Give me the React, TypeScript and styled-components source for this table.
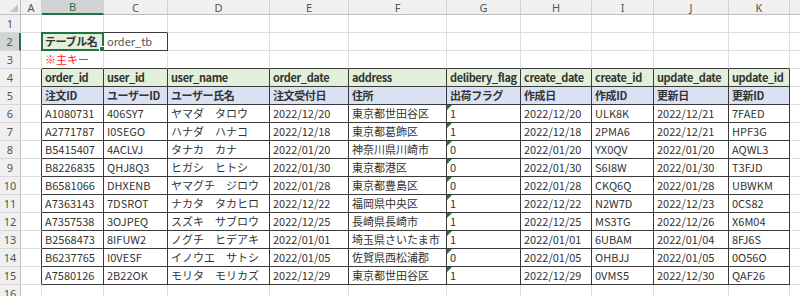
import React from 'react';
import styled, { createGlobalStyle, css } from 'styled-components';

const GlobalStyle = createGlobalStyle`
  html, body {
    margin: 0;
    padding: 0;
    background: #ffffff;
  }
  body {
    font-family: "Noto Sans CJK JP", "Noto Sans", sans-serif;
  }
`;

const COLS = ['A', 'B', 'C', 'D', 'E', 'F', 'G', 'H', 'I', 'J', 'K', ''];
const WIDTHS = [21, 62, 64, 102, 79, 98, 74, 71, 62, 75, 61, 40];

const header = ['order_id', 'user_id', 'user_name', 'order_date', 'address', 'delibery_flag', 'create_date', 'create_id', 'update_date', 'update_id'];
const headerJa = ['注文ID', 'ユーザーID', 'ユーザー氏名', '注文受付日', '住所', '出荷フラグ', '作成日', '作成ID', '更新日', '更新ID'];

const data = [
  ['A1080731', '406SY7', 'ヤマダ　タロウ', '2022/12/20', '東京都世田谷区', '1', '2022/12/20', 'ULK8K', '2022/12/21', '7FAED'],
  ['A2771787', 'I0SEGO', 'ハナダ　ハナコ', '2022/12/18', '東京都葛飾区', '1', '2022/12/18', '2PMA6', '2022/12/21', 'HPF3G'],
  ['B5415407', '4ACLVJ', 'タナカ　カナ', '2022/01/20', '神奈川県川崎市', '0', '2022/01/20', 'YX0QV', '2022/01/20', 'AQWL3'],
  ['B8226835', 'QHJ8Q3', 'ヒガシ　ヒトシ', '2022/01/30', '東京都港区', '0', '2022/01/30', 'S6I8W', '2022/01/30', 'T3FJD'],
  ['B6581066', 'DHXENB', 'ヤマグチ　ジロウ', '2022/01/28', '東京都豊島区', '0', '2022/01/28', 'CKQ6Q', '2022/01/28', 'UBWKM'],
  ['A7363143', '7DSROT', 'ナカタ　タカヒロ', '2022/12/22', '福岡県中央区', '1', '2022/12/22', 'N2W7D', '2022/12/23', '0CS82'],
  ['A7357538', '3OJPEQ', 'スズキ　サブロウ', '2022/12/25', '長崎県長崎市', '1', '2022/12/25', 'MS3TG', '2022/12/26', 'X6M04'],
  ['B2568473', '8IFUW2', 'ノグチ　ヒデアキ', '2022/01/01', '埼玉県さいたま市', '1', '2022/01/01', '6UBAM', '2022/01/04', '8FJ6S'],
  ['B6237765', 'I0VESF', 'イノウエ　サトシ', '2022/01/05', '佐賀県西松浦郡', '0', '2022/01/05', 'OHBJJ', '2022/01/05', '0O56O'],
  ['A7580126', '2B22OK', 'モリタ　モリカズ', '2022/12/29', '東京都世田谷区', '1', '2022/12/29', '0VMS5', '2022/12/30', 'QAF26'],
];

const GRID = '#DEDEDE';
const DARK = '#3a3a3a';
const GREEN = '#217346';

const Sheet = styled.div`
  width: 800px;
  height: 296px;
  overflow: hidden;
  display: grid;
  grid-template-columns: 21px ${WIDTHS.map((w) => `${w}px`).join(' ')};
  grid-template-rows: 15px repeat(16, 18px);
  font-size: 11px;
  color: #333333;
`;

const ColHead = styled.div<{ $active?: boolean }>`
  box-sizing: border-box;
  display: flex;
  align-items: center;
  justify-content: center;
  background: ${(p) => (p.$active ? '#D3D3D3' : '#F0F0F0')};
  color: ${(p) => (p.$active ? GREEN : '#555555')};
  border-right: 1px solid #D0D0D0;
  border-bottom: ${(p) => (p.$active ? `2px solid ${GREEN}` : '1px solid #BFBFBF')};
  font-family: "Noto Sans", "Noto Sans CJK JP", sans-serif;
  font-size: 11px;
`;

const Corner = styled.div`
  box-sizing: border-box;
  position: relative;
  background: #F0F0F0;
  border-right: 1px solid #BFBFBF;
  border-bottom: 1px solid #BFBFBF;
  &::after {
    content: '';
    position: absolute;
    right: 2px;
    bottom: 2px;
    border-left: 8px solid transparent;
    border-bottom: 8px solid #C6C6C6;
  }
`;

const RowHead = styled.div<{ $active?: boolean }>`
  box-sizing: border-box;
  display: flex;
  align-items: center;
  justify-content: center;
  background: ${(p) => (p.$active ? '#D3D3D3' : '#F0F0F0')};
  color: ${(p) => (p.$active ? GREEN : '#555555')};
  border-bottom: 1px solid #D8D8D8;
  border-right: ${(p) => (p.$active ? `2px solid ${GREEN}` : '1px solid #BFBFBF')};
  font-family: "Noto Sans", "Noto Sans CJK JP", sans-serif;
  font-size: 11px;
`;

const Cell = styled.div<{ $bg?: string; $right?: string; $bottom?: string; $bold?: boolean; $color?: string; $flag?: boolean }>`
  box-sizing: border-box;
  position: relative;
  display: flex;
  align-items: flex-end;
  padding: 0 0 1px 3px;
  white-space: nowrap;
  overflow: visible;
  background: ${(p) => p.$bg || '#ffffff'};
  border-right: 1px solid ${(p) => p.$right || GRID};
  border-bottom: 1px solid ${(p) => p.$bottom || GRID};
  font-weight: ${(p) => (p.$bold ? 700 : 400)};
  letter-spacing: ${(p) => (p.$bold ? '-0.4px' : '0')};
  color: ${(p) => p.$color || '#333333'};
  line-height: 16px;
  ${(p) =>
    p.$flag &&
    css`
      &::before {
        content: '';
        position: absolute;
        left: 0;
        top: 0;
        border-top: 5px solid #1E7A3C;
        border-right: 5px solid transparent;
      }
    `}
`;

const Selection = styled.div`
  position: absolute;
  left: -1px;
  top: -1px;
  right: -1px;
  bottom: -1px;
  border: 2px solid ${GREEN};
  pointer-events: none;
  &::after {
    content: '';
    position: absolute;
    right: -4px;
    bottom: -4px;
    width: 5px;
    height: 5px;
    background: ${GREEN};
    border: 1px solid #ffffff;
  }
`;

type CellInfo = { text?: string; bg?: string; bold?: boolean; color?: string; flag?: boolean; selected?: boolean };

function cellAt(r: number, c: number): CellInfo {
  // c: 0 = A, 1 = B ...
  if (r === 2 && c === 1) return { text: 'テーブル名', bg: '#E2EFDA', bold: true, selected: true };
  if (r === 2 && c === 2) return { text: 'order_tb', color: '#555555' };
  if (r === 3 && c === 1) return { text: '※主キー', color: '#FF2020' };
  if (c >= 1 && c <= 10) {
    if (r === 4) return { text: header[c - 1], bg: '#E2EFDA', bold: true };
    if (r === 5) return { text: headerJa[c - 1], bg: '#D9E1F2', bold: true };
    if (r >= 6 && r <= 15) return { text: data[r - 6][c - 1], flag: c === 6 };
  }
  return {};
}

function rightBorder(r: number, c: number) {
  if (r >= 4 && r <= 15 && c >= 0 && c <= 10) return DARK;
  if (r === 2 && (c === 1 || c === 2)) return DARK;
  return undefined;
}

function bottomBorder(r: number, c: number) {
  if (r >= 3 && r <= 15 && c >= 1 && c <= 10) return DARK;
  if ((r === 1 || r === 2) && c === 2) return DARK;
  return undefined;
}

export default function App() {
  const rows = Array.from({ length: 16 }, (_, i) => i + 1);
  return (
    <>
      <GlobalStyle />
      <Sheet>
        <Corner />
        {COLS.map((l, i) => (
          <ColHead key={i} $active={l === 'B'}>
            {l}
          </ColHead>
        ))}
        {rows.map((r) => (
          <React.Fragment key={r}>
            <RowHead $active={r === 2}>{r}</RowHead>
            {COLS.map((l, c) => {
              const info = cellAt(r, c);
              return (
                <Cell
                  key={c}
                  $bg={info.bg}
                  $bold={info.bold}
                  $color={info.color}
                  $flag={info.flag}
                  $right={rightBorder(r, c)}
                  $bottom={bottomBorder(r, c)}
                >
                  {info.text}
                  {info.selected && <Selection />}
                </Cell>
              );
            })}
          </React.Fragment>
        ))}
      </Sheet>
    </>
  );
}
